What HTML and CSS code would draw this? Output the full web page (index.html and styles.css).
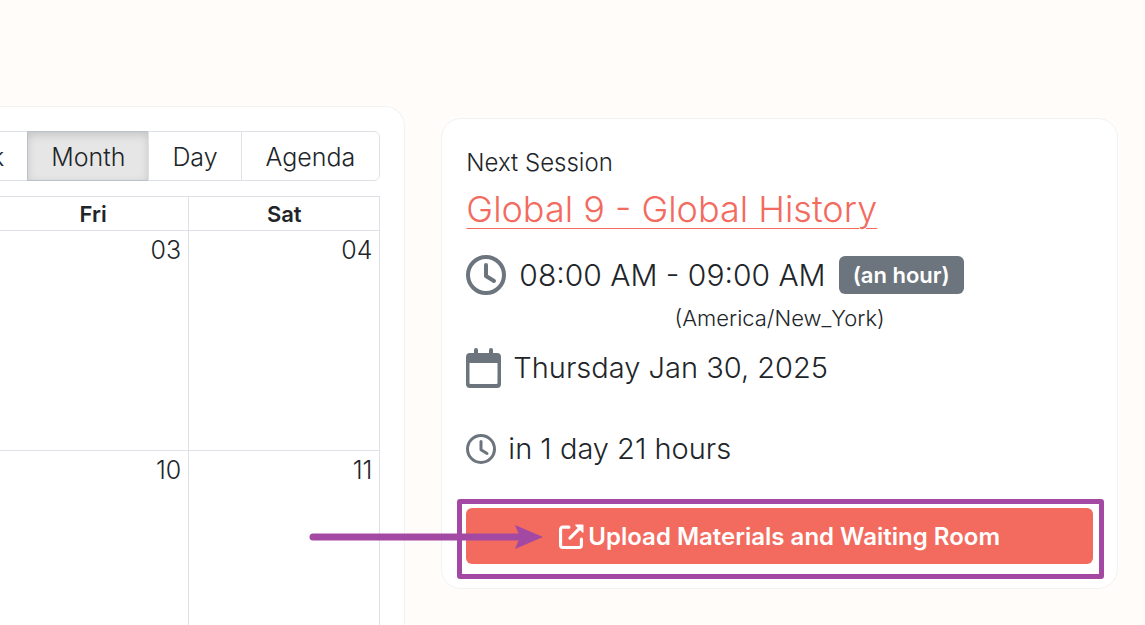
FILE: index.html
```html
<!DOCTYPE html>
<html lang="en">
<head>
    <meta charset="UTF-8">
    <meta name="viewport" content="width=device-width, initial-scale=1.0">
    <title>Dashboard</title>
    <link rel="stylesheet" href="styles.css">
</head>
<body>

    <main class="dashboard">
        <section class="card calendar-card">
            <div class="view-switch">
                <button type="button">Week</button>
                <button type="button" class="active">Month</button>
                <button type="button">Day</button>
                <button type="button">Agenda</button>
            </div>

            <table class="calendar">
                <thead>
                    <tr>
                        <th>Fri</th>
                        <th>Sat</th>
                    </tr>
                </thead>
                <tbody>
                    <tr>
                        <td>03</td>
                        <td>04</td>
                    </tr>
                    <tr>
                        <td>10</td>
                        <td>11</td>
                    </tr>
                </tbody>
            </table>
        </section>

        <section class="card session-card">
            <p class="session-label">Next Session</p>
            <h2 class="session-title"><a href="#">Global 9 - Global History</a></h2>

            <div class="session-row session-time">
                <svg class="icon icon-large" viewBox="0 0 40 40" fill="none" stroke="currentColor" stroke-width="4" stroke-linecap="round" stroke-linejoin="round" aria-hidden="true">
                    <circle cx="20" cy="20" r="18"/>
                    <path d="M20 10v11l8 5"/>
                </svg>
                <span>08:00 AM - 09:00 AM</span>
                <span class="badge">(an hour)</span>
            </div>
            <p class="timezone">(America/New_York)</p>

            <div class="session-row session-date">
                <svg class="icon icon-date" viewBox="0 0 35 40" fill="currentColor" aria-hidden="true">
                    <path fill-rule="evenodd" d="M8 2a2 2 0 0 1 4 0v3h11V2a2 2 0 0 1 4 0v3h4a4 4 0 0 1 4 4v27a4 4 0 0 1-4 4H4a4 4 0 0 1-4-4V9a4 4 0 0 1 4-4h4zM3.500 15v20a1 1 0 0 0 1 1h26a1 1 0 0 0 1-1V15z"/>
                </svg>
                <span>Thursday Jan 30, 2025</span>
            </div>

            <div class="session-row session-countdown">
                <svg class="icon icon-small" viewBox="0 0 40 40" fill="none" stroke="currentColor" stroke-width="4" stroke-linecap="round" stroke-linejoin="round" aria-hidden="true">
                    <circle cx="20" cy="20" r="18"/>
                    <path d="M20 10v11l8 5"/>
                </svg>
                <span>in 1 day 21 hours</span>
            </div>

            <div class="action">
                <button type="button" class="btn-upload">
                    <svg class="icon-link" viewBox="0 0 24 24" fill="none" stroke="currentColor" stroke-width="3" stroke-linecap="round" stroke-linejoin="round" aria-hidden="true">
                        <path d="M9.500 3H3.500a2 2 0 0 0-2 2v15.500a2 2 0 0 0 2 2H19.500a2 2 0 0 0 2-2V14.500"/>
                        <path d="M10.500 13.500 20 4"/>
                        <path d="M16 1h7v7z" fill="currentColor" stroke-width="1"/>
                    </svg>
                    Upload Materials and Waiting Room
                </button>
                <div class="highlight"></div>
                <svg class="arrow" viewBox="0 0 234 26" aria-hidden="true">
                    <path d="M4 13h210" stroke="#a349a4" stroke-width="7" stroke-linecap="round"/>
                    <path d="M206 1l28 12-28 12 5-12z" fill="#a349a4"/>
                </svg>
            </div>
        </section>
    </main>

</body>
</html>
```
FILE: styles.css
```css
* {
    box-sizing: border-box;
}
body {
    font-family: Inter, sans-serif;
    margin: 0;
    color: #212529;
    background-color: #fffcf9;
}
h2, p {
    margin: 0;
    font-weight: 300;
}
.dashboard {
    display: grid;
    grid-template-columns: 405fr 676fr;
    column-gap: 36px;
    align-items: start;
    height: 100vh;
    padding: 106px 27px 0 0;
    overflow: hidden;
}
.card {
    background-color: #fff;
    border: 1px solid #f1f2f4;
    border-radius: 20px;
}

/* calendar */
.calendar-card {
    padding: 24px 24px 0 0;
    border-left: none;
    border-bottom: none;
    border-radius: 0 20px 0 0;
    overflow: hidden;
}
.view-switch {
    display: flex;
    justify-content: flex-end;
    margin-bottom: 15px;
}
.view-switch button {
    height: 50px;
    padding: 2px 23px 0;
    font-family: inherit;
    font-size: 25px;
    font-weight: 300;
    color: #212529;
    background-color: #fff;
    border: 1px solid #dee2e6;
    margin-left: -1px;
    cursor: pointer;
}
.view-switch button.active {
    background-color: #e6e6e6;
    border-color: #b9c1c9;
    box-shadow: inset 0 3px 8px rgba(0, 0, 0, 0.15);
}
.view-switch button:last-child {
    padding: 2px 24px 0;
    border-radius: 0 6px 6px 0;
}
.calendar {
    width: calc(100% + 3px);
    margin-left: -3px;
    table-layout: fixed;
    border-collapse: collapse;
}
.calendar th,
.calendar td {
    border: 1px solid #dee2e6;
}
.calendar th {
    height: 34px;
    padding: 0;
    font-size: 22px;
    font-weight: 600;
}
.calendar td {
    height: 220px;
    padding: 3px 7px;
    font-size: 25px;
    font-weight: 300;
    line-height: 32px;
    text-align: right;
    vertical-align: top;
}

/* next session */
.session-card {
    margin-top: 12px;
    padding: 24px;
}
.session-label {
    font-size: 24px;
    line-height: 40px;
}
.session-title {
    font-size: 36px;
    line-height: 52px;
}
.session-title a {
    color: #f36b5f;
    text-decoration-thickness: 1px;
    text-underline-offset: 6px;
}
.session-row {
    display: flex;
    align-items: center;
    font-size: 29px;
    font-weight: 300;
    line-height: 40px;
    white-space: nowrap;
}
.session-time {
    margin-top: 20px;
    gap: 13px;
    font-size: 30px;
}
.session-date {
    margin-top: 15px;
    gap: 12px;
}
.session-countdown {
    margin-top: 41px;
    gap: 12px;
}
.icon {
    flex: none;
    color: #6c757d;
}
.icon-large {
    width: 40px;
    height: 40px;
}
.icon-date {
    width: 35px;
    height: 40px;
}
.icon-small {
    width: 30px;
    height: 30px;
}
.badge {
    padding: 0 14px;
    font-size: 22px;
    font-weight: 600;
    line-height: 38px;
    color: #fff;
    background-color: #6c757d;
    border-radius: 6px;
}
.timezone {
    margin-top: 8px;
    font-size: 22px;
    line-height: 30px;
    text-align: center;
}
.action {
    position: relative;
    margin-top: 39px;
}
.btn-upload {
    display: flex;
    align-items: center;
    justify-content: center;
    gap: 4px;
    width: 100%;
    height: 56px;
    font-family: inherit;
    font-size: 24px;
    font-weight: 600;
    color: #fff;
    background-color: #f36b5f;
    border: none;
    border-radius: 6px;
    cursor: pointer;
}
.icon-link {
    width: 25px;
    height: 25px;
}
.highlight {
    position: absolute;
    inset: -9px -11px -15px -9px;
    border: 5px solid #a349a4;
    border-radius: 3px;
    pointer-events: none;
}
.arrow {
    position: absolute;
    top: 16px;
    left: -157px;
    width: 234px;
    height: 26px;
    pointer-events: none;
}
```
